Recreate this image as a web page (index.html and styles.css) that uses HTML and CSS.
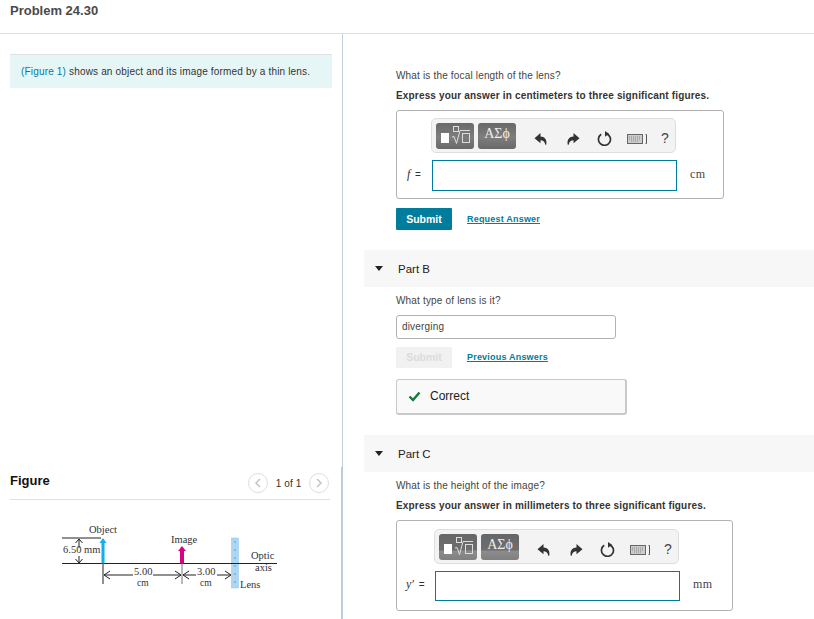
FILE: index.html
```html
<!DOCTYPE html>
<html lang="en">
<head>
<meta charset="utf-8">
<title>Problem 24.30</title>
<link rel="stylesheet" href="styles.css">
</head>
<body>
<svg class="defs" width="0" height="0" aria-hidden="true">
  <symbol id="i-undo" viewBox="0 0 14 14"><path d="M6.500 1 .5 6.200l6 5V8.300c2.600 0 4 1.300 4.800 4.200.3.700.8.500 1 0C13.300 7.500 10.500 4.400 6.500 4.400z"/></symbol>
  <symbol id="i-redo" viewBox="0 0 14 14"><path d="M7.500 1l6 5.200-6 5V8.300c-2.600 0-4 1.300-4.800 4.200-.3.700-.8.500-1 0C.7 7.500 3.500 4.400 7.500 4.400z"/></symbol>
  <symbol id="i-reload" viewBox="0 0 15 15"><path class="ring" d="M4.200 3.300a6 6 0 1 0 5-.7"/><path d="M8 0v5.800L12 2.800z"/></symbol>
  <symbol id="i-keys" viewBox="0 0 21 10"><rect class="key" x=".5" y=".5" width="15" height="9"/><path class="keyrow" d="M2 3h12M2 5h12M4 7h8"/><path class="bracket" d="M18.500 .5h1v9h-1"/></symbol>
  <symbol id="i-math" viewBox="0 0 38 26"><rect class="fill" x="5" y="10" width="8" height="10"/><rect class="line" x="17.500" y="3.500" width="5" height="5"/><path class="line" d="M16 14l2-.5 2.500 7 3.500-13h10"/><rect class="line" x="26.500" y="10.500" width="7" height="9"/></symbol>
</svg>

<header class="top"><h1 class="problem">Problem 24.30</h1></header>

<div class="main">
  <aside class="left">
    <section class="intro">
      <p class="note"><a class="fig-link">(Figure 1)</a> shows an object and its image formed by a thin lens.</p>
    </section>
    <section class="figure">
      <div class="fig-head">
        <h2 class="fig-title">Figure</h2>
        <div class="pager">
          <span class="circle"><svg viewBox="0 0 10 10" width="10" height="10"><path d="M7 1 3 5l4 4"/></svg></span>
          <span class="count">1 of 1</span>
          <span class="circle"><svg viewBox="0 0 10 10" width="10" height="10"><path d="M3 1l4 4-4 4"/></svg></span>
        </div>
      </div>
      <svg class="diagram" viewBox="50 515 230 80" width="230" height="80">
        <rect x="231.500" y="538" width="7" height="50" fill="#aed6f2" stroke="#8cc3ea" stroke-width=".5"/>
        <path d="M235 541v2m0 6v2m0 6v2m0 6v2m0 6v2m0 6v2" stroke="#5b9bcc" stroke-width="1"/>
        <g stroke="#222" stroke-width="1" fill="none">
          <path d="M62 538h39M62 563.500h215"/>
          <path d="M79 539v9M79 556v7M75.500 543l3.500-4 3.500 4M75.500 559l3.500 4 3.500-4"/>
          <path d="M103 563v21"/>
          <path stroke="#777" d="M182 563v21"/>
          <path d="M104 575h29M153 575h28M110 571l-6 4 6 4M175 571l6 4-6 4M183 575h13M217 575h13M189 571l-6 4 6 4M225 571l6 4-6 4"/>
        </g>
        <path d="M101.500 563.500V543H99.500l3.500-5 3.500 5h-2v20.500z" fill="#12aeee"/>
        <path d="M180 563.500V551h-2l4-5 4 5h-2v12.500z" fill="#d5047f"/>
        <g class="dia-text">
          <text x="89" y="533">Object</text>
          <text x="63" y="553">6.50 mm</text>
          <text x="171" y="543">Image</text>
          <text x="251" y="559">Optic</text>
          <text x="255" y="571">axis</text>
          <text x="134" y="575">5.00</text>
          <text class="dia-unit" x="137" y="586">cm</text>
          <text x="197" y="575">3.00</text>
          <text class="dia-unit" x="200" y="586">cm</text>
          <text x="240" y="588">Lens</text>
        </g>
      </svg>
    </section>
  </aside>

  <main class="right">
    <div class="part-body">
      <p class="q first">What is the focal length of the lens?</p>
      <p class="q instr">Express your answer in centimeters to three significant figures.</p>
      <div class="answer ans-a">
        <div class="tools">
          <span class="tbtn"><svg width="38" height="26"><use href="#i-math"/></svg></span>
          <span class="tbtn greek">ΑΣϕ</span>
          <svg class="ic"><use href="#i-undo"/></svg>
          <svg class="ic"><use href="#i-redo"/></svg>
          <svg class="ic reload"><use href="#i-reload"/></svg>
          <svg class="kb"><use href="#i-keys"/></svg>
          <span class="help">?</span>
        </div>
        <div class="entry">
          <span class="lab"><i>f</i> =</span>
          <div class="field"></div>
          <span class="unit">cm</span>
        </div>
      </div>
      <div class="actions">
        <button class="submit">Submit</button>
        <a class="link">Request Answer</a>
      </div>
    </div>

    <h3 class="part part-b"><span class="tri"></span>Part B</h3>
    <div class="part-body">
      <p class="q sub">What type of lens is it?</p>
      <div class="select">diverging</div>
      <div class="actions done">
        <button class="submit off">Submit</button>
        <a class="link prev">Previous Answers</a>
      </div>
      <div class="correct">
        <svg viewBox="0 0 13 11" width="13" height="11"><path d="M1.500 5.500 5 9l6.500-7.500" fill="none" stroke="#127a3e" stroke-width="2.400"/></svg>
        <span>Correct</span>
      </div>
    </div>

    <h3 class="part part-c"><span class="tri"></span>Part C</h3>
    <div class="part-body">
      <p class="q sub">What is the height of the image?</p>
      <p class="q instr">Express your answer in millimeters to three significant figures.</p>
      <div class="answer ans-c">
        <div class="tools">
          <span class="tbtn"><svg width="38" height="26"><use href="#i-math"/></svg></span>
          <span class="tbtn greek">ΑΣϕ</span>
          <svg class="ic"><use href="#i-undo"/></svg>
          <svg class="ic"><use href="#i-redo"/></svg>
          <svg class="ic reload"><use href="#i-reload"/></svg>
          <svg class="kb"><use href="#i-keys"/></svg>
          <span class="help">?</span>
        </div>
        <div class="entry">
          <span class="lab"><i>y′</i> =</span>
          <div class="field"></div>
          <span class="unit">mm</span>
        </div>
      </div>
    </div>
  </main>
</div>
</body>
</html>
```

FILE: styles.css
```css
* { box-sizing: border-box; }
html, body { margin: 0; padding: 0; }
body {
  width: 814px;
  height: 619px;
  overflow: hidden;
  background: #fff;
  font-family: "Liberation Sans", Arial, sans-serif;
  color: #333;
}
.defs { position: absolute; }

.top { height: 34px; border-bottom: 1px solid #dcdfe3; padding-left: 10px; }
.problem { margin: 0; font-size: 13px; line-height: 22px; font-weight: 700; color: #4a4a4a; }

.main { display: flex; height: 585px; }

.left { width: 343px; flex: none; display: flex; flex-direction: column; }
.intro { height: 433px; border-right: 1px solid #c3cfdb; padding: 20px 10px 0 10px; }
.note {
  margin: 0;
  width: 322px;
  height: 34px;
  background: #e6f6f7;
  border-top: 1px solid #dde3e5;
  padding: 0 11px;
  font-size: 10px;
  letter-spacing: .17px;
  line-height: 33px;
  color: #333;
}
.fig-link { color: #007c9c; }

.figure { height: 152px; border-right: 2px solid #b8cde0; padding: 0 11px 0 10px; }
.fig-head {
  height: 33px;
  border-bottom: 1px solid #dcdfe3;
  display: flex;
  justify-content: space-between;
  align-items: center;
}
.fig-title { margin: 0; padding-bottom: 6px; font-size: 13px; font-weight: 700; color: #111; }
.pager { display: flex; align-items: center; padding-right: 1px; }
.circle {
  width: 20px;
  height: 20px;
  border: 1px solid #dedede;
  border-radius: 50%;
  display: flex;
  align-items: center;
  justify-content: center;
}
.circle svg { fill: none; stroke: #c4c4c4; stroke-width: 1.500; }
.count { width: 41px; text-align: center; font-size: 10px; letter-spacing: .1px; color: #333; }

.diagram { display: block; margin: 15px 0 0 40px; }
.dia-text { font-family: "Liberation Serif", serif; font-size: 10.500px; fill: #333; }
.dia-text .dia-unit { font-size: 9.500px; }

.right { flex: 1; padding-left: 21px; min-width: 0; }
.part-body { padding-left: 32px; }
.q { margin: 6px 0 0; font-size: 10px; letter-spacing: .17px; line-height: 14px; color: #444; }
.q.first { margin-top: 35px; }
.q.sub { margin-top: 7px; }
.q.instr { font-weight: 700; color: #333; }

.answer { border: 1px solid #b3b3b3; border-radius: 3px; margin-top: 7px; }
.ans-a { width: 328px; height: 89px; padding: 7px 0 0 34px; }
.ans-c { width: 337px; height: 91px; padding: 8px 0 0 37px; }

.tools {
  width: 245px;
  height: 35px;
  display: flex;
  align-items: center;
  background: #f3f3f3;
  border: 1px solid #dedede;
  border-radius: 5px;
  padding-left: 4px;
  gap: 4px;
}
.tbtn {
  width: 38px;
  height: 26px;
  border-radius: 3px;
  background: linear-gradient(#686868, #7e7e7e 55%, #686868);
  display: flex;
  align-items: center;
  justify-content: center;
  color: #eee;
}
.ans-c .tbtn { background: linear-gradient(#666, #6e6e6e 62%, #8c8c8c 65%, #808080); }
.greek { font-family: "Liberation Serif", serif; font-size: 14px; padding-bottom: 3px; }
#i-math .fill { fill: #fff; }
#i-math .line { fill: none; stroke: #ddd; stroke-width: 1; }
.ic { width: 14px; height: 14px; fill: #333; margin-left: 14px; margin-top: 6px; flex: none; }
.ic.reload { width: 15px; height: 15px; margin-left: 13px; }
#i-reload .ring { fill: none; stroke: #333; stroke-width: 1.700; }
.kb { width: 21px; height: 10px; margin-left: 11px; margin-top: 7px; flex: none; }
#i-keys .key { fill: #ccc; stroke: #666; }
#i-keys .keyrow { stroke: #888; stroke-dasharray: 1 1; fill: none; }
#i-keys .bracket { stroke: #555; fill: none; }
.help { font-size: 14px; color: #444; margin-left: 9px; margin-top: 4px; }

.entry { display: flex; align-items: center; margin-top: 7px; margin-left: -34px; }
.ans-c .entry { margin-left: -37px; }
.lab { width: 35px; padding: 0 0 3px 10px; font-size: 10px; white-space: nowrap; color: #333; }
.lab i { font-family: "Liberation Serif", serif; font-size: 12px; margin-right: 2px; }
.ans-c .lab { width: 38px; padding-left: 9px; }
.field { width: 245px; height: 31px; border: 1px solid #007c9c; background: #fff; }
.ans-c .field { height: 30px; }
.unit { margin-left: 13px; padding-bottom: 3px; font-family: "Liberation Serif", serif; font-size: 12px; letter-spacing: .4px; color: #444; }

.actions { display: flex; align-items: center; margin-top: 9px; gap: 15px; }
.submit {
  width: 56px;
  height: 22px;
  border: 0;
  padding: 0 0 1px;
  border-radius: 1px;
  background: #007c9c;
  color: #fff;
  font: 700 10.500px "Liberation Sans", Arial, sans-serif;
}
.submit.off { background: #f1f1f1; color: #dcdcdc; height: 21px; }
.done { margin-top: 8px; }
.link { font-size: 9px; font-weight: 700; color: #007c9c; text-decoration: underline; letter-spacing: .2px; }
.prev { padding-bottom: 2px; }

.part {
  margin: 0;
  height: 37px;
  background: #f7f7f7;
  display: flex;
  align-items: center;
  font-size: 11.500px;
  font-weight: 400;
  color: #222;
  padding-left: 11px;
}
.part-b { margin-top: 20px; }
.part-c { margin-top: 20px; }
.tri {
  width: 0;
  height: 0;
  border-left: 4.500px solid transparent;
  border-right: 4.500px solid transparent;
  border-top: 5px solid #222;
  margin-right: 15px;
}

.select {
  width: 220px;
  height: 24px;
  margin-top: 7px;
  border: 1px solid #b3b3b3;
  border-radius: 3px;
  padding-left: 5px;
  font-size: 10px;
  letter-spacing: .17px;
  line-height: 22px;
  color: #444;
}
.correct {
  width: 231px;
  height: 36px;
  margin-top: 11px;
  background: #f9f9f9;
  border: 1px solid #c9c9c9;
  border-right-width: 2px;
  border-bottom-width: 2px;
  border-radius: 3px;
  display: flex;
  align-items: center;
  padding: 0 0 1px 11px;
  gap: 9px;
  font-size: 12px;
  color: #222;
}
```
